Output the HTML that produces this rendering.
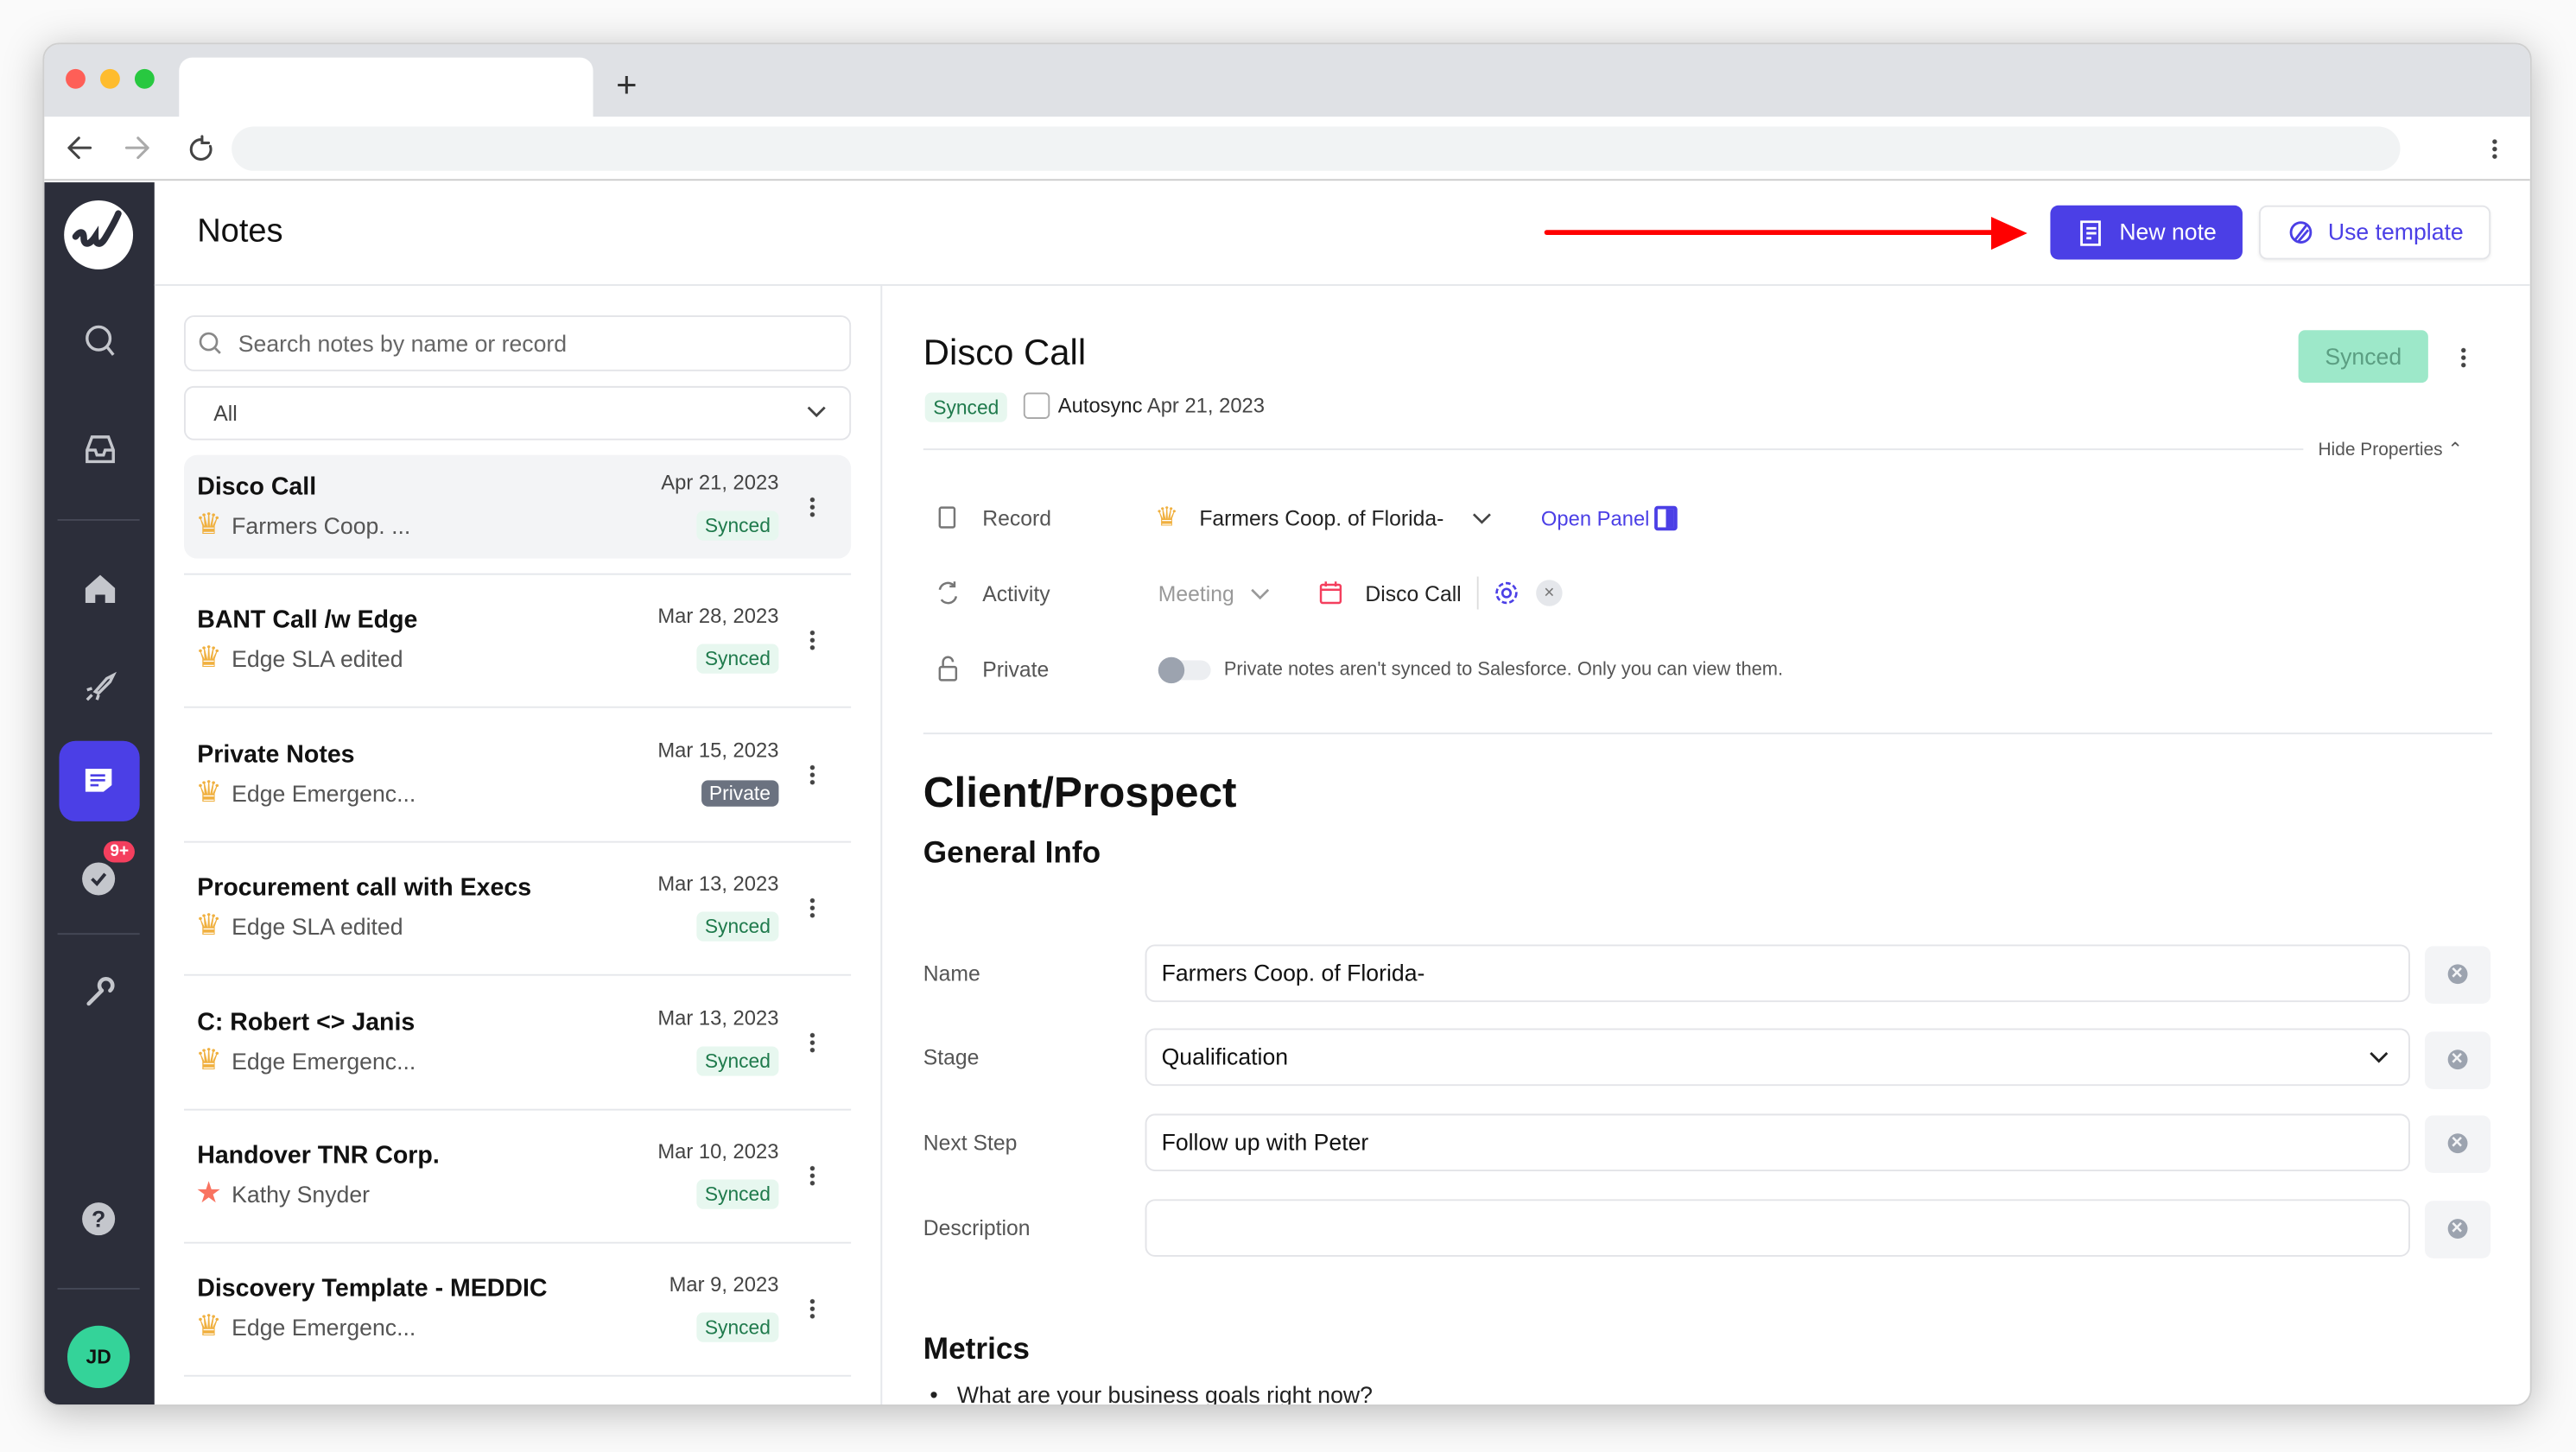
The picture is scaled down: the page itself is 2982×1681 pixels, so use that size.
<!DOCTYPE html>
<html><head><meta charset="utf-8"><style>
*{box-sizing:border-box;margin:0;padding:0}
html,body{width:2982px;height:1680px;overflow:hidden;background:#fff;font-family:"Liberation Sans",sans-serif}
#s{position:absolute;left:0;top:0;width:1568px;height:884px;transform:scale(1.9018);transform-origin:0 0;background:#fafafa}
.a{position:absolute}
.win{left:26px;top:26px;width:1515px;height:830px;border-radius:10px;overflow:hidden;background:#fff;box-shadow:0 4px 24px rgba(0,0,0,.25);border:1px solid #cfcfcf}
.t{white-space:nowrap}
.pill{background:#e7f7ef;color:#1f7a4c;font-size:12px;padding:2px 5px;border-radius:4px}
.item .ti{font-size:15px;color:#111;font-weight:bold}
.item .sub{font-size:14px;color:#555}
.item .dt{font-size:12.5px;color:#444}
.lab{font-size:13px;color:#555}
.inp{border:1px solid #e3e4e8;border-radius:6px;background:#fff;font-size:14px;color:#111;padding-left:9px;line-height:33px}
.xb{width:40px;height:35px;background:#f3f4f6;border-radius:5px}
.xb:after{content:"";position:absolute;left:14px;top:11px;width:12px;height:12px;border-radius:50%;background:#9ca3af}
.xb:before{content:"×";position:absolute;left:16px;top:9px;font-size:12px;color:#f3f4f6;z-index:1;font-weight:bold}
.dots{width:3px;height:13px;background:radial-gradient(circle,#444 1.3px,transparent 1.5px) 0 0/3px 4.5px repeat-y}
</style></head><body><div id="s">
<div class="a win">
 <div class="a" style="left:0;top:0;width:1515px;height:44px;background:#dfe1e5"></div>
 <div class="a" style="left:13px;top:15px;width:12px;height:12px;border-radius:50%;background:#fe5f57"></div>
 <div class="a" style="left:34px;top:15px;width:12px;height:12px;border-radius:50%;background:#febc2e"></div>
 <div class="a" style="left:55px;top:15px;width:12px;height:12px;border-radius:50%;background:#28c840"></div>
 <div class="a" style="left:82px;top:8px;width:252px;height:40px;background:#fff;border-radius:8px 8px 0 0"></div>
 <div class="a t" style="left:348px;top:12px;font-size:22px;color:#333">+</div>
 <div class="a" style="left:0;top:44px;width:1515px;height:39px;background:#fff;border-bottom:1px solid #ccc"></div>
 <svg class="a" style="left:12px;top:54px" width="100" height="20" fill="none" stroke-width="1.6" stroke-linecap="round"><path d="M3 9h13M3 9l6-6M3 9l6 6" stroke="#444"/><path d="M38 9h13M51 9l-6-6M51 9l-6 6" stroke="#aaa"/><path d="M84 4a6 6 0 1 0 5 4M84 2v4h4" stroke="#444"/></svg>
 <div class="a" style="left:114px;top:50px;width:1320px;height:27px;background:#f1f3f4;border-radius:14px"></div>
 <div class="a dots" style="left:1490px;top:57px"></div>
 <div class="a" style="left:0;top:84px;width:67px;height:746px;background:#2c2e3a"></div>
 <div class="a" style="left:12px;top:95px;width:42px;height:42px;border-radius:50%;background:#fff"></div>
 <svg class="a" style="left:12px;top:95px" width="42" height="42" fill="none" stroke="#2c2e3a" stroke-width="4" stroke-linecap="round"><path d="M7 22c3-4 5-3 5 1s3 5 7-1c0 5 3 6 6 1s6-10 8-15"/></svg>
 <svg class="a" style="left:22px;top:169px" width="24" height="24" fill="none" stroke="#c4c6cc" stroke-width="1.8"><circle cx="11" cy="10" r="7"/><path d="M16 15l4 5"/></svg>
 <svg class="a" style="left:22px;top:235px" width="24" height="24" fill="none" stroke="#c4c6cc" stroke-width="1.8"><path d="M4 12l3-8h10l3 8v7H4zM4 12h5l1 3h4l1-3h5"/></svg>
 <div class="a" style="left:8px;top:289px;width:50px;height:1px;background:#454856"></div>
 <svg class="a" style="left:23px;top:321px" width="22" height="22" fill="#c4c6cc"><path d="M2 10l9-8 9 8v9h-6v-5h-6v5H2z"/></svg>
 <svg class="a" style="left:23px;top:380px" width="22" height="22" fill="none" stroke="#c4c6cc" stroke-width="1.8"><path d="M8 14l7-8 4-2-2 4-7 7zM6 12l-3 1M10 16l-1 3M3 19l3-3"/></svg>
 <div class="a" style="left:9px;top:424px;width:49px;height:49px;border-radius:10px;background:#4b3fe6"></div>
 <svg class="a" style="left:24px;top:440px" width="18" height="16"><path d="M1 1h16v10l-5 4H1z" fill="#fff"/><path d="M4 5h9M4 8h9M4 11h5" stroke="#4b3fe6" stroke-width="1.4"/></svg>
 <div class="a" style="left:23px;top:498px;width:20px;height:20px;border-radius:50%;background:#c4c6cc"></div>
 <svg class="a" style="left:23px;top:498px" width="20" height="20" fill="none" stroke="#2c2e3a" stroke-width="2"><path d="M6 10l3 3 5-6"/></svg>
 <div class="a t" style="left:36px;top:485px;background:#f43f5e;color:#fff;font-size:10px;border-radius:8px;padding:1px 4px;font-weight:bold">9+</div>
 <div class="a" style="left:8px;top:541px;width:50px;height:1px;background:#454856"></div>
 <svg class="a" style="left:24px;top:567px" width="20" height="20" fill="none" stroke="#c4c6cc" stroke-width="2.4" stroke-linecap="round"><path d="M3 17l8-8M11 9a4 4 0 1 1 5 0"/></svg>
 <div class="a" style="left:23px;top:705px;width:20px;height:20px;border-radius:50%;background:#c4c6cc;color:#2c2e3a;font-size:14px;font-weight:bold;text-align:center;line-height:20px">?</div>
 <div class="a" style="left:8px;top:757px;width:50px;height:1px;background:#454856"></div>
 <div class="a" style="left:14px;top:780px;width:38px;height:38px;border-radius:50%;background:#34d399;color:#111;font-size:12px;font-weight:bold;text-align:center;line-height:38px">JD</div>
 <div class="a t" style="left:93px;top:103px;font-size:20px;color:#111">Notes</div>
 <div class="a" style="left:67px;top:146px;width:1448px;height:1px;background:#e5e7eb"></div>
 <div class="a" style="left:913px;top:113px;width:284px;height:3px;background:#f00;border-radius:2px"></div>
 <svg class="a" style="left:1185px;top:105px" width="24" height="20"><path d="M0 0L22 10 0 20z" fill="#f00"/></svg>
 <div class="a t" style="left:1221px;top:98px;width:117px;height:33px;background:#4b3fe6;border-radius:5px;color:#fff;font-size:14px;line-height:33px;padding-left:42px">New note</div>
 <svg class="a" style="left:1237px;top:106px" width="18" height="18" fill="none" stroke="#fff" stroke-width="1.5"><path d="M3 2h11v14H3zM6 6h6M6 9h6M6 12h3"/></svg>
 <div class="a t" style="left:1348px;top:98px;width:141px;height:33px;border:1px solid #e3e4e8;border-radius:5px;color:#4b3fe6;font-size:14px;line-height:31px;padding-left:41px;box-shadow:0 1px 2px rgba(0,0,0,.06)">Use template</div>
 <svg class="a" style="left:1366px;top:107px" width="15" height="15" fill="none" stroke="#4b3fe6" stroke-width="1.5"><circle cx="7.5" cy="7.5" r="6"/><path d="M4 12l7-9M6 13l6-7"/></svg>
 <div class="a" style="left:509px;top:147px;width:1px;height:683px;background:#e5e7eb"></div>
 <div class="a t" style="left:85px;top:165px;width:406px;height:34px;border:1px solid #e3e4e8;border-radius:6px;font-size:14px;color:#666;line-height:32px;padding-left:32px">Search notes by name or record</div>
 <svg class="a" style="left:93px;top:174px" width="16" height="16" fill="none" stroke="#888" stroke-width="1.4"><circle cx="7" cy="7" r="5"/><path d="M11 11l3 3"/></svg>
 <div class="a t" style="left:85px;top:208px;width:406px;height:33px;border:1px solid #e3e4e8;border-radius:6px;font-size:13px;color:#444;line-height:31px;padding-left:17px">All</div>
 <svg class="a" style="left:464px;top:219px" width="12" height="10" fill="none" stroke="#444" stroke-width="1.5"><path d="M1 2l5 5 5-5"/></svg>
 <div class="a" style="left:85px;top:250px;width:406px;height:63px;background:#f3f4f6;border-radius:8px"></div>
 <div id="list"></div>
 <div class="a t" style="left:535px;top:175px;font-size:22px;color:#111">Disco Call</div>
 <div class="a t" style="left:1372px;top:174px;width:79px;height:32px;background:#9de8c9;border-radius:4px;color:#5b9e82;font-size:14px;text-align:center;line-height:32px">Synced</div>
 <div class="a dots" style="left:1471px;top:184px"></div>
 <div class="a t pill" style="left:536px;top:212px">Synced</div>
 <div class="a" style="left:596px;top:212px;width:16px;height:16px;border:1px solid #aaa;border-radius:3px"></div>
 <div class="a t" style="left:617px;top:213px;font-size:12.5px;color:#222">Autosync <span style="color:#444">Apr 21, 2023</span></div>
 <div class="a" style="left:535px;top:246px;width:840px;height:1px;background:#e5e7eb"></div>
 <div class="a t" style="left:1384px;top:240px;font-size:11px;color:#555">Hide Properties ⌃</div>
 <svg class="a" style="left:542px;top:280px" width="16" height="16" fill="none" stroke="#777" stroke-width="1.3"><rect x="3" y="2" width="9" height="12" rx="1"/></svg>
 <div class="a t lab" style="left:571px;top:281px">Record</div>
 <div class="a t" style="left:676px;top:278px;font-size:16px;color:#f0b03f">♛</div>
 <div class="a t" style="left:703px;top:281px;font-size:13px;color:#222">Farmers Coop. of Florida-</div>
 <svg class="a" style="left:869px;top:284px" width="12" height="10" fill="none" stroke="#444" stroke-width="1.4"><path d="M1 2l5 5 5-5"/></svg>
 <div class="a t" style="left:911px;top:282px;font-size:12.5px;color:#4b3fe6">Open Panel</div>
 <div class="a" style="left:980px;top:281px;width:14px;height:15px;border:2px solid #4b3fe6;border-radius:2px;background:linear-gradient(90deg,#fff 50%,#4b3fe6 50%)"></div>
 <svg class="a" style="left:542px;top:326px" width="16" height="16" fill="none" stroke="#777" stroke-width="1.3"><path d="M3 6a5 5 0 0 1 9-2M13 10a5 5 0 0 1-9 2M12 1v3H9"/></svg>
 <div class="a t lab" style="left:571px;top:327px">Activity</div>
 <div class="a t" style="left:678px;top:327px;font-size:13px;color:#999">Meeting</div>
 <svg class="a" style="left:734px;top:330px" width="12" height="10" fill="none" stroke="#999" stroke-width="1.4"><path d="M1 2l5 5 5-5"/></svg>
 <svg class="a" style="left:775px;top:326px" width="16" height="16" fill="none" stroke="#f43f5e" stroke-width="1.3"><rect x="2" y="3" width="12" height="11" rx="1"/><path d="M5 1v3M11 1v3M2 6h12"/></svg>
 <div class="a t" style="left:804px;top:327px;font-size:13px;color:#222">Disco Call</div>
 <div class="a" style="left:872px;top:324px;width:1px;height:20px;background:#ddd"></div>
 <svg class="a" style="left:882px;top:326px" width="16" height="16" fill="none" stroke="#4b3fe6" stroke-width="1.4"><circle cx="8" cy="8" r="2.5"/><circle cx="8" cy="8" r="6" stroke-dasharray="3 1.6"/></svg>
 <div class="a t" style="left:908px;top:326px;width:16px;height:16px;border-radius:50%;background:#e5e7eb;color:#777;font-size:11px;text-align:center;line-height:16px">×</div>
 <svg class="a" style="left:542px;top:372px" width="16" height="16" fill="none" stroke="#777" stroke-width="1.3"><rect x="3" y="7" width="10" height="8" rx="1"/><path d="M5 7V4a3 3 0 0 1 6 0"/></svg>
 <div class="a t lab" style="left:571px;top:373px">Private</div>
 <div class="a" style="left:678px;top:375px;width:32px;height:12px;border-radius:6px;background:#eceef1"></div>
 <div class="a" style="left:678px;top:373px;width:16px;height:16px;border-radius:50%;background:#9ca3af"></div>
 <div class="a t" style="left:718px;top:375px;font-size:11.5px;color:#555">Private notes aren't synced to Salesforce. Only you can view them.</div>
 <div class="a" style="left:535px;top:419px;width:955px;height:1px;background:#e5e7eb"></div>
 <div class="a t" style="left:535px;top:440px;font-size:26px;color:#111;font-weight:600">Client/Prospect</div>
 <div class="a t" style="left:535px;top:481px;font-size:18.5px;color:#111;font-weight:600">General Info</div>
 <div class="a t lab" style="left:535px;top:558px">Name</div>
 <div class="a t inp" style="left:670px;top:548px;width:770px;height:35px">Farmers Coop. of Florida-</div>
 <div class="a xb" style="left:1449px;top:549px"></div>
 <div class="a t lab" style="left:535px;top:609px">Stage</div>
 <div class="a t inp" style="left:670px;top:599px;width:770px;height:35px">Qualification</div>
 <svg class="a" style="left:1415px;top:612px" width="12" height="10" fill="none" stroke="#222" stroke-width="1.5"><path d="M1 2l5 5 5-5"/></svg>
 <div class="a xb" style="left:1449px;top:601px"></div>
 <div class="a t lab" style="left:535px;top:661px">Next Step</div>
 <div class="a t inp" style="left:670px;top:651px;width:770px;height:35px">Follow up with Peter</div>
 <div class="a xb" style="left:1449px;top:652px"></div>
 <div class="a t lab" style="left:535px;top:713px">Description</div>
 <div class="a t inp" style="left:670px;top:703px;width:770px;height:35px"></div>
 <div class="a xb" style="left:1449px;top:704px"></div>
 <div class="a t" style="left:535px;top:783px;font-size:18.5px;color:#111;font-weight:600">Metrics</div>
 <div class="a t" style="left:539px;top:814px;font-size:14px;color:#222">•&nbsp;&nbsp;&nbsp;What are your business goals right now?</div>
</div>
</div>
<script>
var d=[["Disco Call","Apr 21, 2023","Farmers Coop. ...","Synced"],["BANT Call /w Edge","Mar 28, 2023","Edge SLA edited","Synced"],["Private Notes","Mar 15, 2023","Edge Emergenc...","Private"],["Procurement call with Execs","Mar 13, 2023","Edge SLA edited","Synced"],["C: Robert <> Janis","Mar 13, 2023","Edge Emergenc...","Synced"],["Handover TNR Corp.","Mar 10, 2023","Kathy Snyder","Synced"],["Discovery Template - MEDDIC","Mar 9, 2023","Edge Emergenc...","Synced"]];
var h="";d.forEach(function(r,i){var y=250+i*81.4;
h+='<div class="a item" style="left:85px;top:'+y+'px;width:406px;height:63px">'
+'<div class="a t ti" style="left:8px;top:11px">'+r[0].replace(/</g,"&lt;").replace(/>/g,"&gt;")+'</div>'
+'<div class="a t dt" style="right:44px;top:10px">'+r[1]+'</div>'
+'<div class="a t" style="left:7px;top:32px;font-size:18px;color:'+(i==5?'#f97360':'#f0b03f')+'">'+(i==5?'★':'♛')+'</div>'
+'<div class="a t sub" style="left:29px;top:35px">'+r[2]+'</div>'
+(r[3]=="Private"?'<div class="a t" style="right:44px;top:35px;background:#6b7280;color:#fff;font-size:12px;padding:1px 5px;border-radius:4px">Private</div>':'<div class="a t pill" style="right:44px;top:34px">Synced</div>')
+'<div class="a dots" style="left:381px;top:25px"></div></div>'
+'<div class="a" style="left:85px;top:'+(y+72)+'px;width:406px;height:1px;background:#e5e7eb"></div>';});
document.getElementById("list").outerHTML=h;
</script>
</body></html>
